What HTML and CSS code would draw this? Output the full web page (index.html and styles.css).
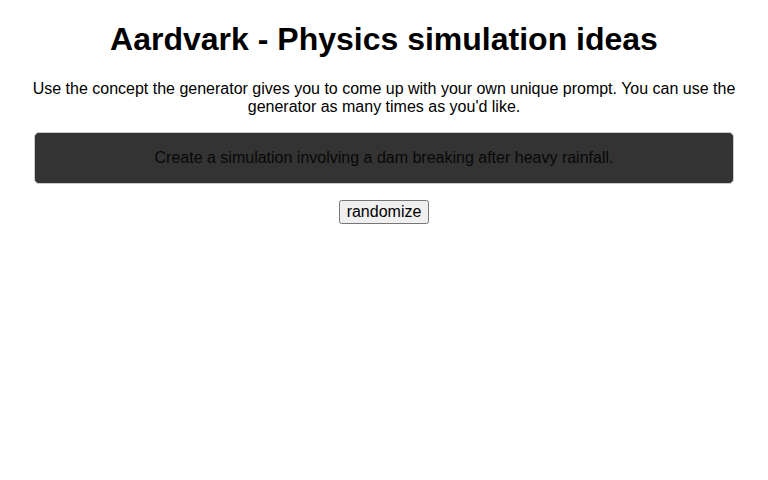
FILE: index.html
```html
<!DOCTYPE html>
<html lang="en">
<head>
  <meta charset="UTF-8" />
  <meta name="viewport" content="width=device-width, initial-scale=1.0">
  <title>Aardvark - Physics simulation ideas</title>
  <link rel="stylesheet" href="styles.css">
</head>
<body>
  <h1>Aardvark - Physics simulation ideas</h1>
  <p class="intro">Use the concept the generator gives you to come up with your own unique prompt. You can use the generator as many times as you'd like.</p>

  <div id="idea" class="idea">Create a simulation involving a dam breaking after heavy rainfall.</div>

  <div class="actions">
    <button class="btn" onclick="randomize()">randomize</button>
  </div>

  <script>
    const ideas = [
      'Create a simulation involving a dam breaking after heavy rainfall.',
      'Create a simulation involving a pendulum swinging on a moving train.',
      'Create a simulation involving balls bouncing inside a rotating box.',
      'Create a simulation involving a rocket escaping a small planet.',
      'Create a simulation involving sand pouring into an hourglass.'
    ];

    function randomize() {
      const pick = ideas[Math.floor(Math.random() * ideas.length)];
      document.getElementById('idea').textContent = pick;
    }
  </script>
</body>
</html>
```

FILE: styles.css
```css
body {
  font-family: "Liberation Sans", Arial, sans-serif;
  background-color: #ffffff;
  color: #000000;
  margin: 0;
  padding: 0 24px;
  text-align: center;
}

h1 {
  font-size: 32px;
  margin: 21px 0 22px;
}

.intro {
  font-size: 16px;
  margin: 0 0 16px;
}

.idea {
  margin: 0 10px;
  padding: 16px;
  background-color: #333333;
  color: #080808;
  border: 1px solid #cccccc;
  border-radius: 5px;
  font-size: 16px;
}

.actions {
  margin-top: 16px;
}

.btn {
  font-family: "Liberation Sans", Arial, sans-serif;
  font-size: 16px;
}
```
